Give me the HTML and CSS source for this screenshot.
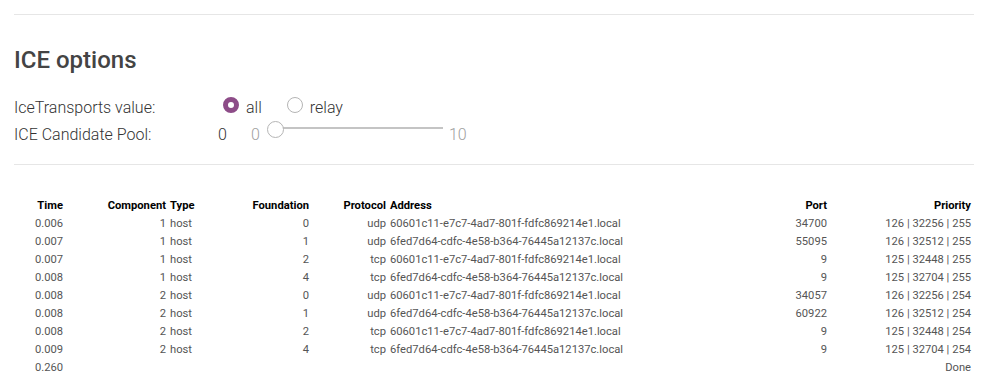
FILE: index.html
```html
<!DOCTYPE html>
<html lang="en">
<head>
  <meta charset="UTF-8" />
  <title>Trickle ICE</title>
  <link rel="stylesheet" href="styles.css">
</head>
<body>

  <div class="container">
    <hr>

    <h2>ICE options</h2>

    <!-- ICE transport policy -->
    <div class="row">
      <label class="label">IceTransports value:</label>
      <span class="radio checked"></span><span class="opt">all</span>
      <span class="radio relay"></span><span class="opt">relay</span>
    </div>

    <!-- Candidate pool size -->
    <div class="row">
      <label class="label">ICE Candidate Pool:</label>
      <span class="pool">0</span>
      <span class="range-min">0</span>
      <div class="slider">
        <span class="thumb"></span>
        <span class="track"></span>
      </div>
      <span class="range-max">10</span>
    </div>

    <hr>

    <table id="candidates">
      <colgroup>
        <col class="c-time">
        <col class="c-comp">
        <col class="c-type">
        <col class="c-found">
        <col class="c-proto">
        <col class="c-addr">
        <col class="c-port">
        <col>
      </colgroup>
      <thead>
        <tr>
          <th>Time</th>
          <th>Component</th>
          <th class="left">Type</th>
          <th>Foundation</th>
          <th>Protocol</th>
          <th class="left">Address</th>
          <th>Port</th>
          <th class="last">Priority</th>
        </tr>
      </thead>
      <tbody>
        <tr><td>0.006</td><td>1</td><td class="left">host</td><td>0</td><td>udp</td><td class="left">60601c11-e7c7-4ad7-801f-fdfc869214e1.local</td><td>34700</td><td class="last">126 | 32256 | 255</td></tr>
        <tr><td>0.007</td><td>1</td><td class="left">host</td><td>1</td><td>udp</td><td class="left">6fed7d64-cdfc-4e58-b364-76445a12137c.local</td><td>55095</td><td class="last">126 | 32512 | 255</td></tr>
        <tr><td>0.007</td><td>1</td><td class="left">host</td><td>2</td><td>tcp</td><td class="left">60601c11-e7c7-4ad7-801f-fdfc869214e1.local</td><td>9</td><td class="last">125 | 32448 | 255</td></tr>
        <tr><td>0.008</td><td>1</td><td class="left">host</td><td>4</td><td>tcp</td><td class="left">6fed7d64-cdfc-4e58-b364-76445a12137c.local</td><td>9</td><td class="last">125 | 32704 | 255</td></tr>
        <tr><td>0.008</td><td>2</td><td class="left">host</td><td>0</td><td>udp</td><td class="left">60601c11-e7c7-4ad7-801f-fdfc869214e1.local</td><td>34057</td><td class="last">126 | 32256 | 254</td></tr>
        <tr><td>0.008</td><td>2</td><td class="left">host</td><td>1</td><td>udp</td><td class="left">6fed7d64-cdfc-4e58-b364-76445a12137c.local</td><td>60922</td><td class="last">126 | 32512 | 254</td></tr>
        <tr><td>0.008</td><td>2</td><td class="left">host</td><td>2</td><td>tcp</td><td class="left">60601c11-e7c7-4ad7-801f-fdfc869214e1.local</td><td>9</td><td class="last">125 | 32448 | 254</td></tr>
        <tr><td>0.009</td><td>2</td><td class="left">host</td><td>4</td><td>tcp</td><td class="left">6fed7d64-cdfc-4e58-b364-76445a12137c.local</td><td>9</td><td class="last">125 | 32704 | 254</td></tr>
        <tr><td>0.260</td><td colspan="6"></td><td class="last">Done</td></tr>
      </tbody>
    </table>
  </div>

</body>
</html>
```

FILE: styles.css
```css
* {
  box-sizing: border-box;
}

body {
  margin: 0;
  font-family: Roboto, "Liberation Sans", sans-serif;
  color: #444;
  background: #fff;
}

.container {
  width: 960px;
  margin-left: 14px;
  padding-top: 14px;
}

hr {
  margin: 0;
  border: none;
  border-top: 1px solid #e6e6e6;
}

h2 {
  margin: 31px 0 20px;
  font-size: 24px;
  font-weight: 500;
  line-height: 28px;
  color: #444;
}

.row {
  display: flex;
  align-items: flex-start;
  height: 27px;
  font-size: 16px;
  font-weight: 300;
  line-height: 27px;
  color: #333;
}

.row + hr {
  margin-top: 16px;
}

.label {
  width: 204px;
}

.radio {
  width: 16px;
  height: 16px;
  margin: 3px 0 0 5px;
  border: 1px solid #b5b5b5;
  border-radius: 50%;
  background: #fff;
}

.radio.checked {
  border: 5px solid #8d4c88;
}

.radio.relay {
  margin-left: 25px;
}

.opt {
  margin-left: 7px;
}

.pool {
  width: 33px;
}

.range-min, .range-max {
  color: #a0a0a0;
}

.slider {
  position: relative;
  width: 176px;
  height: 17px;
  margin-left: 7px;
}

.slider .track {
  position: absolute;
  left: 16px;
  right: 0;
  top: 6px;
  height: 2px;
  background: #c4c4c4;
}

.slider .thumb {
  position: absolute;
  left: 0;
  top: 0;
  width: 17px;
  height: 17px;
  border: 1px solid #b5b5b5;
  border-radius: 50%;
  background: #fff;
  z-index: 1;
}

.range-max {
  margin-left: 6px;
}

table {
  width: 960px;
  margin-top: 32px;
  border-collapse: collapse;
  table-layout: fixed;
  font-size: 11.2px;
  color: #555;
}

th, td {
  height: 18px;
  padding: 0 2px;
  line-height: 18px;
  text-align: right;
  white-space: nowrap;
  font-weight: 400;
}

th {
  font-weight: bold;
  color: #000;
}

th.left, td.left {
  text-align: left;
}

th.last, td.last {
  padding-right: 3px;
}

.c-time { width: 51px; }
.c-comp { width: 103px; }
.c-type { width: 82px; }
.c-found { width: 61px; }
.c-proto { width: 77px; }
.c-addr { width: 361px; }
.c-port { width: 80px; }
```
